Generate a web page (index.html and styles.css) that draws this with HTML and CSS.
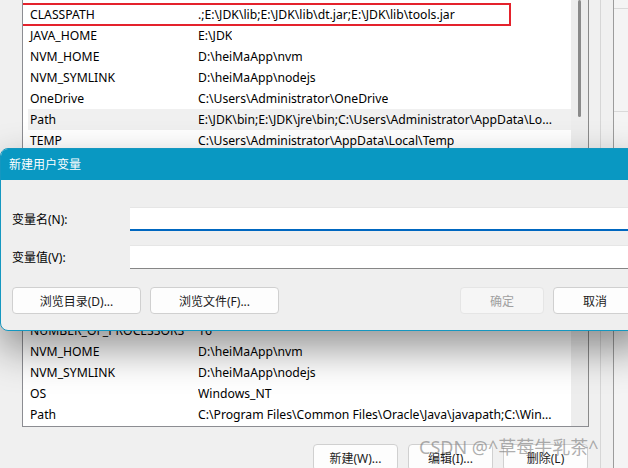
FILE: index.html
```html
<!DOCTYPE html>
<html lang="zh-CN">
<head>
  <meta charset="UTF-8" />
  <title>新建用户变量</title>
  <link rel="stylesheet" href="styles.css">
</head>
<body>

  <!-- 背景：环境变量窗口 -->
  <div class="window">
    <div class="main">

      <!-- 用户变量 -->
      <div class="list upper">
        <div class="rows">
          <div class="row">
            <span class="name">CLASSPATH</span><span class="value">.;E:\JDK\lib;E:\JDK\lib\dt.jar;E:\JDK\lib\tools.jar</span>
            <div class="mark"></div>
          </div>
          <div class="row"><span class="name">JAVA_HOME</span><span class="value">E:\JDK</span></div>
          <div class="row"><span class="name">NVM_HOME</span><span class="value">D:\heiMaApp\nvm</span></div>
          <div class="row"><span class="name">NVM_SYMLINK</span><span class="value">D:\heiMaApp\nodejs</span></div>
          <div class="row"><span class="name">OneDrive</span><span class="value">C:\Users\Administrator\OneDrive</span></div>
          <div class="row active"><span class="name">Path</span><span class="value">E:\JDK\bin;E:\JDK\jre\bin;C:\Users\Administrator\AppData\Lo...</span></div>
          <div class="row"><span class="name">TEMP</span><span class="value">C:\Users\Administrator\AppData\Local\Temp</span></div>
          <div class="row"><span class="name">TMP</span><span class="value">C:\Users\Administrator\AppData\Local\Temp</span></div>
        </div>
        <div class="scroll"><div class="thumb"></div></div>
      </div>

      <div class="spacer"></div>

      <!-- 系统变量 -->
      <div class="list lower">
        <div class="rows">
          <div class="row"><span class="name">NUMBER_OF_PROCESSORS</span><span class="value">16</span></div>
          <div class="row"><span class="name">NVM_HOME</span><span class="value">D:\heiMaApp\nvm</span></div>
          <div class="row"><span class="name">NVM_SYMLINK</span><span class="value">D:\heiMaApp\nodejs</span></div>
          <div class="row"><span class="name">OS</span><span class="value">Windows_NT</span></div>
          <div class="row"><span class="name">Path</span><span class="value">C:\Program Files\Common Files\Oracle\Java\javapath;C:\Win...</span></div>
        </div>
        <div class="scroll"></div>
      </div>

      <div class="actions">
        <button class="btn">新建(W)...</button>
        <button class="btn">编辑(I)...</button>
        <button class="btn">删除(L)</button>
      </div>
    </div>

    <div class="edge">
      <div class="e1"></div>
      <div class="e2"></div>
      <div class="e3"><div class="pane"></div><div class="pane"></div></div>
    </div>
  </div>

  <!-- 新建用户变量 对话框 -->
  <div class="dialog">
    <div class="title">新建用户变量</div>
    <div class="body">
      <div class="field">
        <label>变量名(N):</label>
        <div class="input focused"></div>
      </div>
      <div class="field">
        <label>变量值(V):</label>
        <div class="input"></div>
      </div>
      <div class="buttons">
        <div class="group">
          <button class="btn wide">浏览目录(D)...</button>
          <button class="btn wide">浏览文件(F)...</button>
        </div>
        <div class="group">
          <button class="btn disabled">确定</button>
          <button class="btn">取消</button>
        </div>
      </div>
    </div>
  </div>

  <div class="watermark">CSDN @^草莓牛乳茶^</div>

</body>
</html>
```

FILE: styles.css
```css
body {
  margin: 0;
  width: 628px;
  height: 468px;
  overflow: hidden;
  position: relative;
  background: #f0f0f0;
  font-family: 'Noto Sans', 'Noto Sans CJK SC', sans-serif;
  font-size: 12px;
  color: #000;
}

button {
  font-family: inherit;
}

.window {
  display: flex;
  height: 468px;
}

.main {
  width: 589px;
  height: 468px;
  display: flex;
  flex-direction: column;
  flex-shrink: 0;
}

/* 列表 */
.list {
  margin-left: 22px;
  display: flex;
  background: #fff;
  border-left: 1px solid #8c8d92;
  border-right: 1px solid #8a8a8a;
  flex-shrink: 0;
  overflow: hidden;
}
.list.upper {
  height: 190px;
}
.list.lower {
  border-top: 1px solid #8c8d92;
  border-bottom: 1px solid #8c8d92;
}

.rows {
  flex: 1;
  margin-left: 5px;
  padding-top: 4px;
}
.lower .rows {
  padding-top: 0;
  padding-bottom: 1px;
}

.row {
  position: relative;
  display: flex;
  height: 21px;
  line-height: 21px;
  white-space: nowrap;
  font-size: 12.2px;
}
.row.active {
  background: #f0f0f0;
}
.row .name {
  width: 168px;
  padding-left: 2px;
  flex-shrink: 0;
}
.row .value {
  overflow: hidden;
}

/* 红框标注 */
.mark {
  position: absolute;
  left: -7px;
  top: -1px;
  width: 490px;
  height: 23px;
  border: 2px solid #e4222c;
  box-sizing: border-box;
}

.scroll {
  width: 17px;
  background: #ededed;
  position: relative;
  flex-shrink: 0;
}
.thumb {
  position: absolute;
  left: 7px;
  top: 0;
  width: 3px;
  height: 117px;
  border-radius: 2px;
  background: #8a8a8a;
}

.spacer {
  flex: 1;
}

.actions {
  display: flex;
  justify-content: flex-end;
  align-items: flex-start;
  gap: 10px;
  margin-top: 17px;
  padding-right: 1px;
  height: 24px;
  flex-shrink: 0;
}

.btn {
  height: 27px;
  width: 85px;
  padding: 0;
  background: #fdfdfd;
  border: 1px solid #d0d0d0;
  border-radius: 4px;
  font-size: 12px;
  color: #1b1b1b;
  flex-shrink: 0;
}

/* 右侧窗口边 */
.edge {
  flex: 1;
  display: flex;
}
.e1 {
  width: 11px;
  border-right: 1px solid #d6d6d6;
}
.e2 {
  width: 12px;
  border-right: 1px solid #9c9c9c;
}
.e3 {
  flex: 1;
  background: #f4f4f4;
  padding-top: 8px;
}
.pane {
  height: 102px;
  border-top: 1px solid #d9d9d9;
}

/* 对话框 */
.dialog {
  position: absolute;
  left: 0;
  top: 148px;
  width: 648px;
  border: 1px solid #1597c0;
  border-radius: 8px;
  overflow: hidden;
  background: #efefef;
  box-shadow: 0 18px 40px rgba(0, 0, 0, 0.42);
}
.title {
  height: 31px;
  line-height: 31px;
  padding-left: 8px;
  background: #0998c2;
  color: #fff;
}
.body {
  padding: 27px 12px 16px 11px;
  display: flex;
  flex-direction: column;
  gap: 14px;
}
.field {
  display: flex;
  align-items: center;
}
.field label {
  width: 118px;
  flex-shrink: 0;
}
.input {
  flex: 1;
  height: 24px;
  background: #fff;
  box-sizing: border-box;
  border-top: 1px solid #e6e6e6;
  border-bottom: 1px solid #868686;
}
.input.focused {
  border-bottom: 2px solid #0067c0;
}

.buttons {
  display: flex;
  justify-content: space-between;
  margin-top: 4px;
}
.group {
  display: flex;
  gap: 9px;
}
.btn.wide {
  width: 129px;
}
.group + .group .btn {
  width: 84px;
}
.btn.disabled {
  background: #f6f6f6;
  border-color: #e5e5e5;
  color: #a0a0a0;
}

.watermark {
  position: absolute;
  left: 419px;
  top: 437px;
  line-height: 20px;
  font-size: 18px;
  color: rgba(120, 120, 120, 0.6);
  white-space: nowrap;
}
```
